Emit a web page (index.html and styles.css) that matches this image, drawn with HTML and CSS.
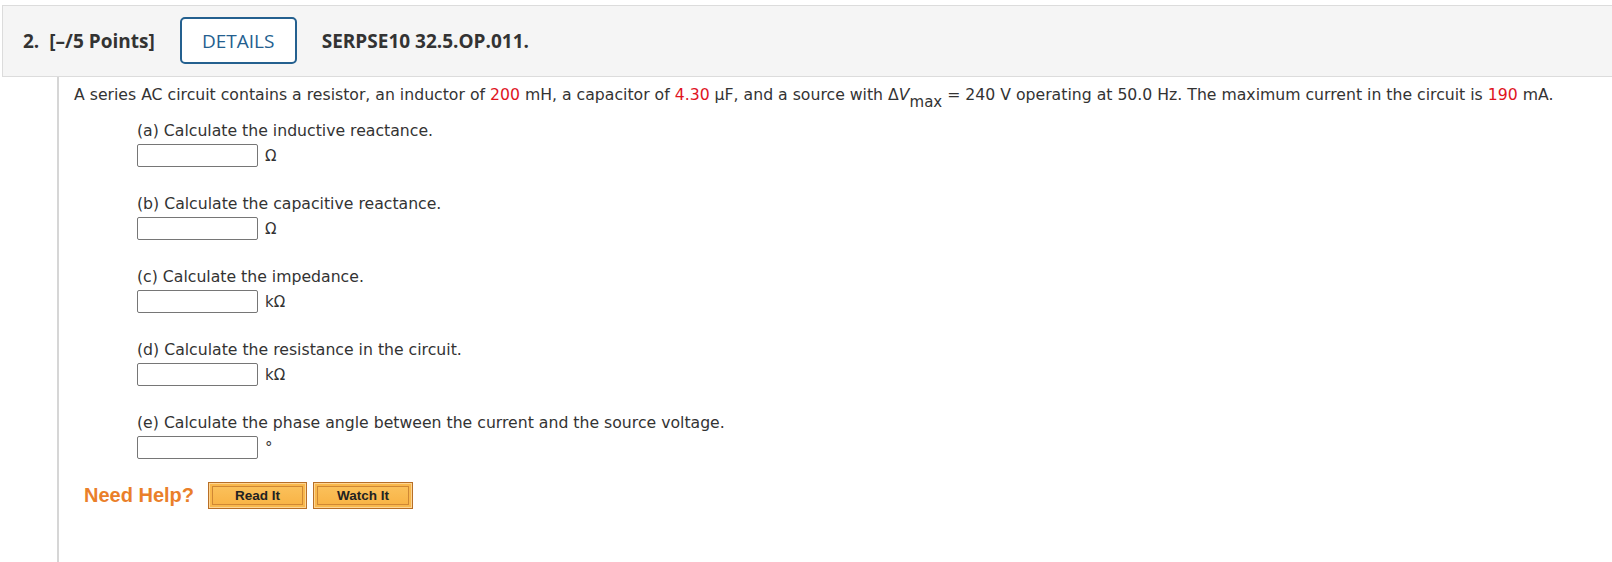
FILE: index.html
```html
<!DOCTYPE html>
<html lang="en">
<head>
    <meta charset="UTF-8">
    <title>SERPSE10 32.5.OP.011.</title>
    <link rel="stylesheet" href="styles.css">
</head>
<body>
    <div class="question">
        <header class="question-header">
            <span class="q-num">2.</span>
            <span class="q-points">[&ndash;/5 Points]</span>
            <button class="btn-details">DETAILS</button>
            <span class="q-code">SERPSE10 32.5.OP.011.</span>
        </header>

        <div class="question-body">
            <p class="problem">
                A series AC circuit contains a resistor, an inductor of <span class="val">200</span> mH, a capacitor of <span class="val">4.30</span> &micro;F, and a source with &Delta;<i>V</i><sub>max</sub> = 240 V operating at 50.0 Hz. The maximum current in the circuit is <span class="val">190</span> mA.
            </p>

            <div class="parts">
                <div class="part">
                    <div class="part-label">(a) Calculate the inductive reactance.</div>
                    <div class="answer"><input type="text" class="answer-input"><span class="unit">&Omega;</span></div>
                </div>
                <div class="part">
                    <div class="part-label">(b) Calculate the capacitive reactance.</div>
                    <div class="answer"><input type="text" class="answer-input"><span class="unit">&Omega;</span></div>
                </div>
                <div class="part">
                    <div class="part-label">(c) Calculate the impedance.</div>
                    <div class="answer"><input type="text" class="answer-input"><span class="unit">k&Omega;</span></div>
                </div>
                <div class="part">
                    <div class="part-label">(d) Calculate the resistance in the circuit.</div>
                    <div class="answer"><input type="text" class="answer-input"><span class="unit">k&Omega;</span></div>
                </div>
                <div class="part">
                    <div class="part-label">(e) Calculate the phase angle between the current and the source voltage.</div>
                    <div class="answer"><input type="text" class="answer-input"><span class="unit">&deg;</span></div>
                </div>
            </div>

            <div class="need-help">
                <span class="need-help-title">Need Help?</span>
                <button class="btn-help">Read It</button>
                <button class="btn-help">Watch It</button>
            </div>
        </div>
    </div>
</body>
</html>
```

FILE: styles.css
```css
:root {
    --text: #333;
    --red: #e0141e;
    --blue: #24608f;
    --orange: #ea7f2a;
}

body {
    margin: 0;
    padding: 5px 0 0 2px;
    background: white;
    color: var(--text);
    font-family: "DejaVu Sans", Verdana, sans-serif;
    font-size: 15.7px;
}

.question-header {
    display: flex;
    align-items: center;
    height: 69px;
    padding: 0 0 1px 20px;
    background: #f5f5f5;
    border: 1px solid #dcdcdc;
    border-right: none;
    font-family: "Open Sans", sans-serif;
    font-size: 19px;
    font-weight: 700;
    color: #333;
}

.q-num {
    margin-right: 10px;
}

.btn-details {
    margin: 0 25px;
    width: 117px;
    height: 47px;
    background: white;
    border: 2px solid var(--blue);
    border-radius: 5px;
    color: var(--blue);
    font-family: inherit;
    font-size: 19px;
    font-weight: 400;
    cursor: pointer;
}

.question-body {
    margin-left: 55px;
    padding: 0 0 10px 15px;
    border-left: 2px solid #d6d6d6;
    min-height: 476px;
}

.problem {
    margin: 0;
    padding-top: 7px;
    line-height: 22px;
}

.problem sub {
    font-size: 15px;
    line-height: 0;
    vertical-align: -7px;
}

.val {
    color: var(--red);
}

.parts {
    margin: 14px 0 0 63px;
}

.part {
    margin-bottom: 26px;
}

.part-label {
    line-height: 22px;
}

.answer {
    display: flex;
    align-items: center;
    margin-top: 2px;
}

.answer-input {
    box-sizing: border-box;
    width: 121px;
    height: 23px;
    margin: 0;
    border: 1px solid #767676;
    border-radius: 2px;
}

.unit {
    margin-left: 7px;
    font-size: 15px;
}

.need-help {
    display: flex;
    align-items: center;
    gap: 6px;
    margin: -3px 0 0 10px;
}

.need-help-title {
    margin-right: 8px;
    color: var(--orange);
    font-family: "Liberation Sans", Arial, sans-serif;
    font-size: 20px;
    font-weight: bold;
}

.btn-help {
    width: 99px;
    height: 27px;
    padding: 0;
    background: linear-gradient(#fbc35f, #f8b142);
    border: 1px solid #b86f27;
    box-shadow: inset 0 0 0 1px #fdd594, inset 0 0 0 3px #f9b84c, inset 0 0 0 4px #cf8734;
    color: #222;
    font-family: "Liberation Sans", Arial, sans-serif;
    font-size: 13.5px;
    font-weight: bold;
    cursor: pointer;
}

.btn-help + .btn-help {
    width: 100px;
}
```
